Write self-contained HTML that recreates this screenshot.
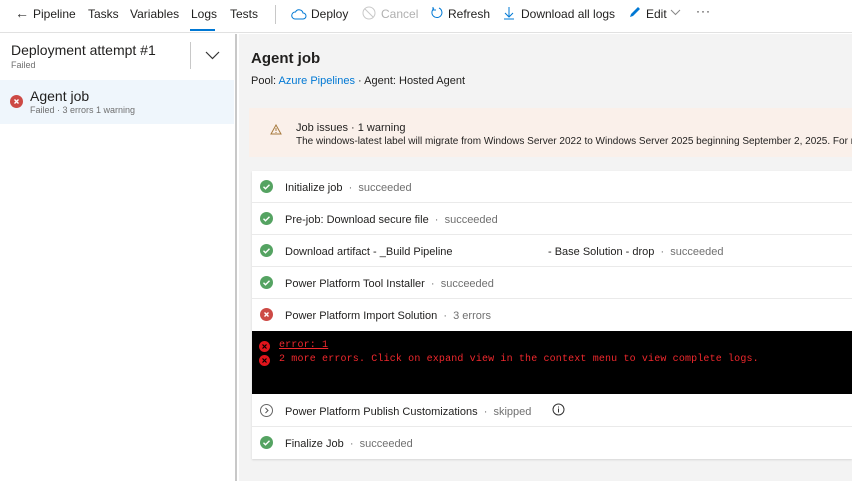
<!DOCTYPE html>
<html><head><style>
*{margin:0;padding:0;box-sizing:border-box}
body{width:852px;height:481px;overflow:hidden;font-family:"Liberation Sans",sans-serif;font-size:12px;color:#201f1e;background:#fff;position:relative}
.a{position:absolute;white-space:nowrap}
.top{position:absolute;left:0;top:0;width:852px;height:33px;background:#fff;border-bottom:1px solid #e1e1e1}
.nav{font-size:12px;top:7px}
.left{position:absolute;left:0;top:34px;width:237px;height:447px;background:#fff;border-right:2px solid #c8c8c8}
.right{position:absolute;left:239px;top:34px;width:613px;height:447px;background:#f3f3f3}
.card{position:absolute;left:252px;top:171px;width:600px;height:288px;background:#fff;box-shadow:0 1px 2px rgba(0,0,0,.12)}
.row{position:absolute;left:0;width:600px;height:32px;border-bottom:1px solid #eaeaea}
.row .t{position:absolute;left:33px;top:11px;font-size:11px}
.row .s{color:#707070}
.ic{position:absolute;left:8px;top:9px;width:13px;height:13px;border-radius:50%}
.ok{background:#55a362}
.er{background:#cd4a45}
.ic svg{position:absolute;left:0;top:0}
</style></head><body>
<div class="top">
<span class="a nav" style="left:15px;top:5px;font-size:14px;color:#333">&#8592;</span>
<span class="a nav" style="left:33px">Pipeline</span>
<span class="a nav" style="left:88px">Tasks</span>
<span class="a nav" style="left:130px">Variables</span>
<span class="a nav" style="left:191px">Logs</span>
<div class="a" style="left:190px;top:29px;width:25px;height:2px;background:#0078d4"></div>
<span class="a nav" style="left:230px">Tests</span>
<div class="a" style="left:275px;top:5px;width:1px;height:19px;background:#c8c8c8"></div>
<svg class="a" style="left:291px;top:8px" width="16" height="12" viewBox="0 0 16 12"><path d="M4 11h8a3 3 0 0 0 0-6 4 4 0 0 0-7.5-1A3.5 3.5 0 0 0 4 11z" fill="none" stroke="#0078d4" stroke-width="1"/></svg>
<span class="a nav" style="left:311px">Deploy</span>
<svg class="a" style="left:362px;top:6px" width="14" height="14"><circle cx="7" cy="7" r="6" fill="none" stroke="#c8c8c8"/><path d="M3 3l8 8" stroke="#c8c8c8"/></svg>
<span class="a nav" style="left:381px;color:#b0b0b0">Cancel</span>
<svg class="a" style="left:430px;top:6px" width="13" height="13"><path d="M4 2.5A5 5 0 1 0 9 2" fill="none" stroke="#0078d4"/><path d="M3 1v3h3" fill="none" stroke="#0078d4"/></svg>
<span class="a nav" style="left:448px">Refresh</span>
<svg class="a" style="left:503px;top:6px" width="12" height="14"><path d="M6 1v10M2 7l4 4 4-4M1 13h10" fill="none" stroke="#0078d4"/></svg>
<span class="a nav" style="left:521px">Download all logs</span>
<svg class="a" style="left:628px;top:6px" width="13" height="13"><path d="M2 11l1-3 7-7 2 2-7 7z" fill="#0078d4"/></svg>
<span class="a nav" style="left:646px">Edit</span>
<svg class="a" style="left:670px;top:9px" width="11" height="7"><path d="M1 1l4.5 4.5L10 1" fill="none" stroke="#888"/></svg>
<span class="a nav" style="left:696px;top:4px;letter-spacing:1px">···</span>
</div>
<div class="left">
<div class="a" style="left:11px;top:8px;font-size:14px">Deployment attempt #1</div>
<div class="a" style="left:11px;top:26px;font-size:9px;color:#707070">Failed</div>
<div class="a" style="left:190px;top:8px;width:1px;height:27px;background:#c8c8c8"></div>
<svg class="a" style="left:205px;top:17px" width="15" height="9"><path d="M1 1l6.5 6.5L14 1" fill="none" stroke="#333" stroke-width="1.2"/></svg>
<div class="a" style="left:0;top:46px;width:234px;height:44px;background:#eff6fc"></div>
<div class="a" style="left:10px;top:61px;width:13px;height:13px;border-radius:50%;background:#cd4a45"><svg width="13" height="13"><path d="M4.5 4.5l4 4M8.5 4.5l-4 4" stroke="#fff" stroke-width="1.4"/></svg></div>
<div class="a" style="left:30px;top:54px;font-size:14px">Agent job</div>
<div class="a" style="left:30px;top:71px;font-size:9px;color:#707070">Failed · 3 errors 1 warning</div>
</div>
<div class="right">
<div class="a" style="left:12px;top:16px;font-size:15px;font-weight:bold">Agent job</div>
<div class="a" style="left:12px;top:41px;font-size:11px">Pool: <span style="color:#0078d4">Azure Pipelines</span> · Agent: Hosted Agent</div>
<div class="a" style="left:10px;top:74px;width:603px;height:49px;background:#faf0ea"></div>
<svg class="a" style="left:31px;top:90px" width="12" height="11"><path d="M6 1L11 10H1z" fill="none" stroke="#a67a3d"/><path d="M6 4v3M6 8v1" stroke="#a67a3d"/></svg>
<div class="a" style="left:57px;top:88px;font-size:11px">Job issues · 1 warning</div>
<div class="a" style="left:57px;top:102px;font-size:10px">The windows-latest label will migrate from Windows Server 2022 to Windows Server 2025 beginning September 2, 2025. For more</div>
</div>
<div class="card">
<div class="row" style="top:0"><div class="ic ok"><svg width="13" height="13"><path d="M3.5 6.8l2 2 4-4" fill="none" stroke="#fff" stroke-width="1.4"/></svg></div><span class="t">Initialize job &nbsp;<span class="s">· &nbsp;succeeded</span></span></div>
<div class="row" style="top:32px"><div class="ic ok"><svg width="13" height="13"><path d="M3.5 6.8l2 2 4-4" fill="none" stroke="#fff" stroke-width="1.4"/></svg></div><span class="t">Pre-job: Download secure file &nbsp;<span class="s">· &nbsp;succeeded</span></span></div>
<div class="row" style="top:64px"><div class="ic ok"><svg width="13" height="13"><path d="M3.5 6.8l2 2 4-4" fill="none" stroke="#fff" stroke-width="1.4"/></svg></div><span class="t">Download artifact - _Build Pipeline</span><span class="t" style="left:296px">- Base Solution - drop &nbsp;<span class="s">· &nbsp;succeeded</span></span></div>
<div class="row" style="top:96px"><div class="ic ok"><svg width="13" height="13"><path d="M3.5 6.8l2 2 4-4" fill="none" stroke="#fff" stroke-width="1.4"/></svg></div><span class="t">Power Platform Tool Installer &nbsp;<span class="s">· &nbsp;succeeded</span></span></div>
<div class="row" style="top:128px;border:none"><div class="ic er"><svg width="13" height="13"><path d="M4.5 4.5l4 4M8.5 4.5l-4 4" stroke="#fff" stroke-width="1.4"/></svg></div><span class="t">Power Platform Import Solution &nbsp;<span class="s">· &nbsp;3 errors</span></span></div>
<div class="a" style="left:0;top:160px;width:600px;height:63px;background:#000;font-family:'Liberation Mono',monospace;font-size:10px;letter-spacing:.15px;color:#f0282d">
<div class="a" style="left:7px;top:10px;width:11px;height:11px;border-radius:50%;background:#e0141b"><svg width="11" height="11"><path d="M3.5 3.5l4 4M7.5 3.5l-4 4" stroke="#000" stroke-width="1.2"/></svg></div>
<span class="a" style="left:27px;top:9px;text-decoration:underline">error: 1</span>
<div class="a" style="left:7px;top:24px;width:11px;height:11px;border-radius:50%;background:#e0141b"><svg width="11" height="11"><path d="M3.5 3.5l4 4M7.5 3.5l-4 4" stroke="#000" stroke-width="1.2"/></svg></div>
<span class="a" style="left:27px;top:23px">2 more errors. Click on expand view in the context menu to view complete logs.</span>
</div>
<div class="row" style="top:224px"><div class="ic" style="border:1px solid #666"><svg width="11" height="11"><path d="M4.5 3l2.5 2.5L4.5 8" fill="none" stroke="#555"/></svg></div><span class="t">Power Platform Publish Customizations &nbsp;<span class="s">· &nbsp;skipped</span></span><svg class="a" style="left:300px;top:8px" width="13" height="13"><circle cx="6.5" cy="6.5" r="5.5" fill="none" stroke="#333"/><path d="M6.5 5.5v4M6.5 3.5v1" stroke="#333"/></svg></div>
<div class="row" style="top:256px;border:none"><div class="ic ok"><svg width="13" height="13"><path d="M3.5 6.8l2 2 4-4" fill="none" stroke="#fff" stroke-width="1.4"/></svg></div><span class="t">Finalize Job &nbsp;<span class="s">· &nbsp;succeeded</span></span></div>
</div>
</body></html>
